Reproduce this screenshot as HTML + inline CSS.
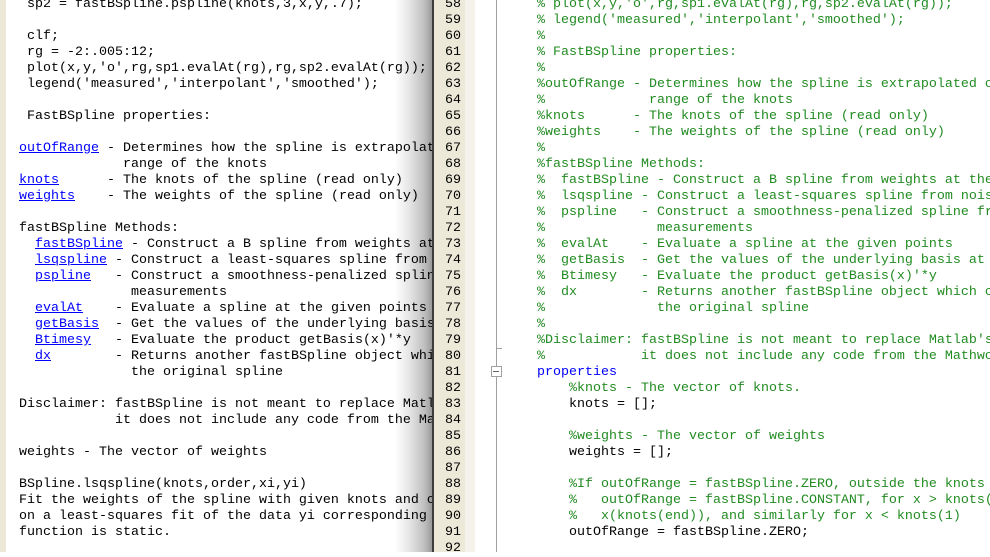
<!DOCTYPE html>
<html><head><style>
html,body{margin:0;padding:0;width:990px;height:552px;overflow:hidden;background:#fff}
.mono{font-family:"Liberation Mono",monospace;font-size:13.33px;line-height:16px;white-space:pre;}
#left{position:absolute;left:0;top:0;width:432px;height:552px;overflow:hidden;background:linear-gradient(to right,#ece9d8 0,#ece9d8 6px,#fff 6px,#fff 395px,#e4e4e4 410px,#bdbdbd 425px,#9a9a9a 432px);}
#left .mono{position:absolute;left:19px;top:-3px;color:#000}
a{color:#0000ff;text-decoration:underline}
#sep{position:absolute;left:432px;top:0;width:2px;height:552px;background:#3c3c3c}
#gut{position:absolute;left:434px;top:0;width:31px;height:552px;background:#ece9d8}
#gut2{position:absolute;left:465px;top:0;width:10px;height:552px;background:#f4f2ea}
#nums{position:absolute;left:434px;width:27px;top:-3px;text-align:right;color:#000}
#fold{position:absolute;left:496px;top:0;width:1px;height:552px;background:#a0a0a0}
#codewrap{position:absolute;left:537px;top:0;width:453px;height:552px;overflow:hidden}
#code{position:absolute;left:0;top:-3px;color:#000}
.c{color:#228b22}.k{color:#0000ff}
</style></head><body>
<div id="left"><div class="mono"> sp2 = fastBSpline.pspline(knots,3,x,y,.7);

 clf;
 rg = -2:.005:12;
 plot(x,y,'o',rg,sp1.evalAt(rg),rg,sp2.evalAt(rg));
 legend('measured','interpolant','smoothed');

 FastBSpline properties:

<a>outOfRange</a> - Determines how the spline is extrapolated outside the
             range of the knots
<a>knots</a>      - The knots of the spline (read only)
<a>weights</a>    - The weights of the spline (read only)

fastBSpline Methods:
  <a>fastBSpline</a> - Construct a B spline from weights at the knots
  <a>lsqspline</a> - Construct a least-squares spline from noisy
  <a>pspline</a>   - Construct a smoothness-penalized spline from
              measurements
  <a>evalAt</a>    - Evaluate a spline at the given points
  <a>getBasis</a>  - Get the values of the underlying basis at x
  <a>Btimesy</a>   - Evaluate the product getBasis(x)'*y
  <a>dx</a>        - Returns another fastBSpline object which computes
              the original spline

Disclaimer: fastBSpline is not meant to replace Matlab's spline
            it does not include any code from the Mathworks

weights - The vector of weights

BSpline.lsqspline(knots,order,xi,yi)
Fit the weights of the spline with given knots and order
on a least-squares fit of the data yi corresponding
function is static.</div></div>
<div id="sep"></div>
<div id="gut"></div><div id="gut2"></div>
<div id="nums" class="mono">58
59
60
61
62
63
64
65
66
67
68
69
70
71
72
73
74
75
76
77
78
79
80
81
82
83
84
85
86
87
88
89
90
91
92</div>
<div id="fold"></div>
<div style="position:absolute;left:496px;top:348px;width:6px;height:1px;background:#a0a0a0"></div>
<div style="position:absolute;left:491px;top:366px;width:9px;height:9px;border:1px solid #a0a0a0;background:#fff"></div>
<div style="position:absolute;left:493px;top:371px;width:6px;height:1px;background:#606060"></div>
<div id="codewrap"><div id="code" class="mono"><span class="c">% plot(x,y,'o',rg,sp1.evalAt(rg),rg,sp2.evalAt(rg));
% legend('measured','interpolant','smoothed');
%
% FastBSpline properties:
%
%outOfRange - Determines how the spline is extrapolated outside the
%             range of the knots
%knots      - The knots of the spline (read only)
%weights    - The weights of the spline (read only)
%
%fastBSpline Methods:
%  fastBSpline - Construct a B spline from weights at the knots
%  lsqspline - Construct a least-squares spline from noisy
%  pspline   - Construct a smoothness-penalized spline from
%              measurements
%  evalAt    - Evaluate a spline at the given points
%  getBasis  - Get the values of the underlying basis at x
%  Btimesy   - Evaluate the product getBasis(x)'*y
%  dx        - Returns another fastBSpline object which computes
%              the original spline
%
%Disclaimer: fastBSpline is not meant to replace Matlab's spline
%            it does not include any code from the Mathworks</span>
<span class="k">properties</span>
    <span class="c">%knots - The vector of knots.</span>
    knots = [];

    <span class="c">%weights - The vector of weights</span>
    weights = [];

    <span class="c">%If outOfRange = fastBSpline.ZERO, outside the knots</span>
    <span class="c">%   outOfRange = fastBSpline.CONSTANT, for x &gt; knots(end)</span>
    <span class="c">%   x(knots(end)), and similarly for x &lt; knots(1)</span>
    outOfRange = fastBSpline.ZERO;
</div></div>
</body></html>
